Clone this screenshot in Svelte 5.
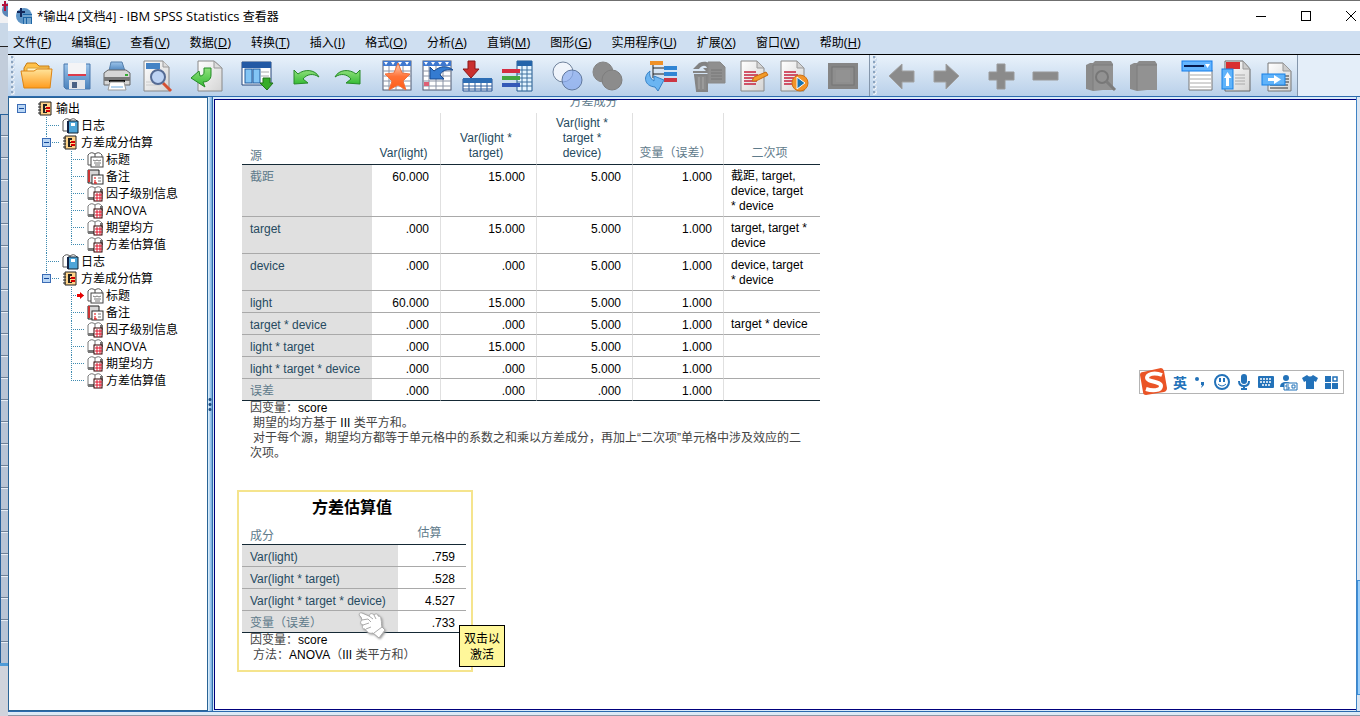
<script>
  const menus = [
    ["文件", "F"],
    ["编辑", "E"],
    ["查看", "V"],
    ["数据", "D"],
    ["转换", "T"],
    ["插入", "I"],
    ["格式", "O"],
    ["分析", "A"],
    ["直销", "M"],
    ["图形", "G"],
    ["实用程序", "U"],
    ["扩展", "X"],
    ["窗口", "W"],
    ["帮助", "H"]
  ];

  const sheet = `<path d="M4 1h16l7 7v23H4z" fill="url(#paper)" stroke="#888"/><path d="M20 1v7h7z" fill="#d5d5d5" stroke="#999"/>`;
  const lines = `<path d="M7 12h12M7 15h14M7 18h10M7 21h13M7 24h12" stroke="#c8203c" stroke-width="1.4"/>`;
  const grid = `<rect x="2" y="1" width="28" height="29" fill="#fff" stroke="#4f5870"/><path d="M2 1h28v5H2z" fill="#3f78cf"/><path d="M2 11h28M2 16h28M2 21h28M2 26h28M8 6v24M15 6v24M22 6v24" stroke="#8a93a5"/><path d="M3 2h4l-2 3zM10 2h4l-2 3zM17 2h4l-2 3zM24 2h4l-2 3z" fill="#fff"/>`;
  const book = `<path d="M2 5l4-2h3l2-2h16l2 3v25l-20 2-7-2z" fill="#8b8b8b"/><path d="M9 5h20v25H9z" fill="#929292"/><path d="M9 5v25M9 5h20" stroke="#7c7c7c" fill="none"/>`;

  const icons = {
    open: `<path d="M3 8l3-5h9l3 3h10v8H3z" fill="#ffc14a" stroke="#c47a12"/><path d="M6 8h21v8H6z" fill="#fff3c8" stroke="#d9a33a"/><path d="M0 11h13l3-2h15l-2 19H3z" fill="url(#orange)" stroke="#dd8413"/>`,
    save: `<path d="M3 4h26v25H5l-2-2z" fill="url(#blue)" stroke="#4a79ad"/><path d="M7 3h18v13H7z" fill="#f4f4f6"/><path d="M7 14h18v2H7z" fill="#dc3b4a"/><path d="M8 20h16v9H8z" fill="#e3e6ea"/><path d="M11 22h5v6h-5z" fill="#4a6285"/>`,
    print: `<path d="M8 11L10 2h11l3 9z" fill="url(#blue)" stroke="#557fab"/><path d="M3 13l4-3h18l4 3v12H3z" fill="#d6d6d6" stroke="#666"/><path d="M3 17h26v4H3z" fill="#777"/><path d="M8 20h16v2H8z" fill="#111"/><path d="M9 22h14l2 8H7z" fill="#fff" stroke="#999"/><path d="M10 27h12" stroke="#68a6dc"/><path d="M24 15h3" stroke="#32ad32" stroke-width="2"/>`,
    preview: `<path d="M3 1h19l6 6v24H3z" fill="url(#paper)" stroke="#888"/><path d="M5 3h14v6H5z" fill="#4483c5"/><path d="M22 1v6h6" fill="#ddd" stroke="#999"/><path d="M5 22h12M5 25h14" stroke="#ccc"/><path d="M22 23l8 8" stroke="#d55031" stroke-width="3"/><circle cx="17" cy="17" r="7" fill="#bdd3f4" stroke="#556b94" stroke-width="2"/>`,
    exportDoc: `<path d="M7 1h16l8 7v23H7z" fill="url(#paper)" stroke="#888"/><path d="M23 1v7h8z" fill="#ddd" stroke="#999"/><path d="M13 8h7v7c0 5-4 7-8 7l2 5L0 18l8-7 1 5c3 0 4-2 4-4z" fill="url(#green)" stroke="#258c26"/>`,
    recall: `<path d="M1 2h29v23H1z" fill="#fff" stroke="#244578"/><path d="M1 2h29v6H1z" fill="#235aa5"/><rect x="4" y="9" width="7" height="14" fill="#83c5f5" stroke="#225b9c"/><rect x="12" y="9" width="7" height="14" fill="#83c5f5" stroke="#225b9c"/><path d="M20 12h8M20 16h8" stroke="#aaa"/><path d="M22 18h7v5h3l-6 7-7-7h3z" fill="#36ad28" stroke="#207318"/>`,
    undo: `<path d="M3 10v14l14-1-5-4c4-5 10-6 16-2-4-8-15-8-21-3z" fill="url(#green)" stroke="#278a28"/>`,
    redo: `<path d="M29 10v14l-14-1 5-4c-4-5-10-6-16-2 4-8 15-8 21-3z" fill="url(#green)" stroke="#278a28"/>`,
    star: grid + `<path d="M17 3l4 10 8 1-7 7 3 9-8-5-9 5 3-9-7-7 9-1z" fill="url(#fire)" stroke="#f2703a"/>`,
    gotoCase: grid + `<path d="M3 22h5v4H3z" fill="#df6075"/><path d="M9 7l4 4c6-5 13-6 19-1-8-1-11 1-13 5l4 4H9z" fill="#347bd1" stroke="#184a90"/>`,
    gotoVar: `<path d="M2 19h29v12H2z" fill="#fff" stroke="#244f8e"/><path d="M2 18h29v5H2z" fill="#2d6db4"/><path d="M2 26h29M2 29h29M8 23v8M14 23v8M20 23v8M26 23v8" stroke="#2f5e9d"/><path d="M7 1h7v8h4l-8 9-8-9h5z" fill="#ca302e" stroke="#8a1717"/>`,
    variables: `<path d="M16 1h15v30H16z" fill="#e5f5ff" stroke="#1f568e"/><path d="M16 1h15v5H16z" fill="#2465aa"/><path d="M16 10h15M16 14h15M16 18h15M16 22h15M16 26h15M21 6v25M26 6v25" stroke="#3d719f"/><path d="M1 11h18" stroke="#d52e42" stroke-width="4"/><path d="M1 18h18" stroke="#45a642" stroke-width="4"/><path d="M1 25h18" stroke="#3459b7" stroke-width="4"/>`,
    venn: `<circle cx="12" cy="12" r="10" fill="#f5f8fd" fill-opacity=".8" stroke="#71839c"/><circle cx="21" cy="20" r="10" fill="#87a9ee" fill-opacity=".7" stroke="#60789e"/>`,
    vennOff: `<circle cx="12" cy="12" r="10" fill="#8c8c8c" stroke="#858585"/><circle cx="21" cy="20" r="10" fill="#8c8c8c" stroke="#7e7e7e"/>`,
    designate: `<path d="M8 4v14M8 8h14M8 14h14" stroke="#222" fill="none"/><path d="M5 3h13" stroke="#ef9128" stroke-width="4"/><path d="M19 8h13M19 14h13" stroke="#3185d4" stroke-width="4"/><path d="M19 20h13" stroke="#cc3543" stroke-width="4"/><path d="M5 11c-7 5-6 15 5 16l3 4 6-11-10-4v5c-4-2-5-7-4-10z" fill="#6bb5f2" stroke="#3781c5"/>`,
    trash: `<path d="M0 9l6-6c7-3 12 0 12 5h4l-6 6-6-6h4c-1-3-5-3-8 1z" fill="#828282"/><path d="M0 12h16M2 15h12v16H4z" fill="#8b8b8b" stroke="#858585" stroke-width="2"/><path d="M6 17v12M10 17v12" stroke="#aaa"/><path d="M15 2h12l5 5v16H15z" fill="#8f8f8f" stroke="#888"/><path d="M18 10h11M18 13h11M18 16h11M18 19h11" stroke="#777"/>`,
    editText: sheet + lines + `<path d="M15 21l2-4 12-5 2 3-12 6z" fill="#f29b28" stroke="#c76a10"/>`,
    run: sheet + lines + `<circle cx="23" cy="23" r="8" fill="#f29429" stroke="#cc7115"/><path d="M20 17v12l8-6z" fill="#1674b1" stroke="#fff"/>`,
    slide: `<rect x="1" y="3" width="30" height="26" fill="#858585"/><rect x="5" y="7" width="22" height="18" fill="#8e8e8e" stroke="#747474"/><rect x="9" y="10" width="14" height="12" fill="#929292"/>`,
    back: `<path d="M3 16L16 4v7h12v11H16v7z" fill="#8b8b8b" stroke="#a1a1a1"/>`,
    forward: `<path d="M29 16L16 4v7H4v11h12v7z" fill="#8b8b8b" stroke="#a1a1a1"/>`,
    plus: `<path d="M12 4h8v8h9v8h-9v9h-8v-9H4v-8h8z" fill="#8b8b8b" stroke="#999"/>`,
    minus: `<path d="M4 12h25v8H4z" fill="#8b8b8b" stroke="#999"/>`,
    bookFind: book + `<circle cx="18" cy="17" r="6" fill="none" stroke="#777" stroke-width="2"/><path d="M22 21l9 9" stroke="#7c7c7c" stroke-width="3"/>`,
    book: book,
    dropdown: `<path d="M8 10h23v20H8z" fill="#fff" stroke="#777"/><path d="M9 15h21M9 19h21M9 23h21M9 27h21" stroke="#aaa"/><rect x="1" y="1" width="30" height="10" fill="#64b5ff" stroke="#147de9"/><path d="M3 6h20" stroke="#061b50" stroke-width="2"/><path d="M24 4h5l-2.500 4z" fill="#fff"/>`,
    upDoc: `<path d="M4 1h18l7 8v22H4z" fill="url(#paper)" stroke="#666"/><path d="M5 2h14v7H5z" fill="#d92e30"/><path d="M22 1v8h7z" fill="#ccc" stroke="#999"/><path d="M14 15h10M14 18h10M14 21h10M14 24h10" stroke="#aaa"/><rect x="1" y="9" width="11" height="20" fill="#60b3fa" stroke="#1680e5"/><path d="M6.500 12l4 6H8v8H5v-8H3z" fill="#fff"/>`,
    rightDoc: `<path d="M7 3h15l8 8v20H7z" fill="url(#paper)" stroke="#777"/><path d="M22 3v8h8z" fill="#ccc" stroke="#999"/><path d="M9 28h18M24 16h4M24 19h4M24 22h4M9 25h18" stroke="#333"/><rect x="1" y="14" width="23" height="11" fill="#60b3fa" stroke="#1680e5"/><path d="M7 18h6v-3l7 4.500-7 4.500v-3H7z" fill="#fff"/>`
  };

  const mainTools = [
    ["open", "save", "print", "preview"],
    ["exportDoc"],
    ["recall"],
    ["undo", "redo"],
    ["star", "gotoCase", "gotoVar", "variables"],
    ["venn", "vennOff"],
    ["designate", "trash", "editText", "run"],
    ["slide"]
  ];
  const outlineTools = [
    ["back", "forward"],
    ["plus", "minus"],
    ["bookFind", "book"],
    ["dropdown", "upDoc", "rightDoc"]
  ];
  const extraWide = ["designate", "trash"];
  const wide = ["back", "forward", "plus", "minus", "bookFind", "book"];

  const ledger = `<path d="M1 3q3-4 7-1 4-3 7 1v10H1z" fill="#fff" stroke="#555"/><path d="M8 2v10" stroke="#555"/>`;
  const nodeIcons = {
    output: `<path d="M3 1h11v13H3z" fill="#ffd489" stroke="#222"/><path d="M1 3h3M1 6h3M1 9h3M1 12h3" stroke="#222"/><path d="M6 3h4v2H8v2h2v1H8v3h2v1H6z" fill="#222"/><path d="M9 7h4M9 10h4" stroke="#d40000" stroke-width="2"/>`,
    log: ledger + `<path d="M6 3h10v12H6z" fill="#4ea5d8" stroke="#123"/><path d="M9 5h4v3H9z" fill="#fff"/><path d="M6 3v12" stroke="#124" stroke-width="2"/>`,
    title: ledger + `<rect x="4" y="5" width="12" height="10" fill="#fff" stroke="#444"/><path d="M6 8l2 1 2-1 2 1 2-1M7 11h7M8 13h5" stroke="#777" fill="none"/>`,
    notes: `<path d="M1 1h11v13H1z" fill="#d7d7d7" stroke="#222"/><path d="M2 1v12" stroke="#c33" stroke-width="2"/><rect x="5" y="6" width="11" height="9" fill="#fff" stroke="#333"/><path d="M8 8v2M8 11v3M7 14h3" stroke="#d00"/><path d="M11 9h3M11 12h3" stroke="#777"/>`,
    table: `<path d="M1 3q3-4 7-1 4-3 7 1v10H1z" fill="#fff" stroke="#777"/><path d="M8 2v10" stroke="#777"/><path d="M1 11h6v3H1zM13 3h3v5h-3z" fill="#777"/><rect x="7" y="6" width="8" height="9" fill="#fff" stroke="#300"/><path d="M8 9h7M8 12h7M10 7v8M13 7v8" stroke="#e0142d"/>`
  };

  const children = [
    ["标题", "title"],
    ["备注", "notes"],
    ["因子级别信息", "table"],
    ["ANOVA", "table"],
    ["期望均方", "table"],
    ["方差估算值", "table"]
  ];

  let outline = [
    { name: "输出", icon: "output", level: 0, open: true },
    ...[0, 1].flatMap(run => [
      { name: "日志", icon: "log", level: 1 },
      { name: "方差成分估算", icon: "output", level: 1, open: true, last: run === 1 },
      ...children.map(([name, icon], i) => ({
        name,
        icon,
        level: 2,
        trunk: run === 0,
        last: i === children.length - 1,
        current: run === 1 && i === 0
      }))
    ])
  ];

  const meanSquares = [
    ["截距", "60.000", "15.000", "5.000", "1.000", ["截距, target,", "device, target", "* device"]],
    ["target", ".000", "15.000", "5.000", "1.000", ["target, target *", "device"]],
    ["device", ".000", ".000", "5.000", "1.000", ["device, target", "* device"]],
    ["light", "60.000", "15.000", "5.000", "1.000", []],
    ["target * device", ".000", ".000", "5.000", "1.000", ["target * device"]],
    ["light * target", ".000", "15.000", "5.000", "1.000", []],
    ["light * target * device", ".000", ".000", "5.000", "1.000", []],
    ["误差", ".000", ".000", ".000", "1.000", []]
  ];

  const estimates = [
    ["Var(light)", ".759"],
    ["Var(light * target)", ".528"],
    ["Var(light * target * device)", "4.527"],
    ["变量（误差）", ".733"]
  ];

  const isHan = text => /[\u4e00-\u9fff]/.test(text);
</script>

<svg class="defs" aria-hidden="true">
  <defs>
    <linearGradient id="paper" x2="1" y2="1"><stop stop-color="#fff" /><stop offset="1" stop-color="#d4d4d4" /></linearGradient>
    <linearGradient id="orange" x2="0" y2="1"><stop stop-color="#ffe49b" /><stop offset="1" stop-color="#ff9c1e" /></linearGradient>
    <linearGradient id="blue" x2="0" y2="1"><stop stop-color="#9cc4ea" /><stop offset="1" stop-color="#4b83bd" /></linearGradient>
    <linearGradient id="green" x2="0" y2="1"><stop stop-color="#8fe07c" /><stop offset="1" stop-color="#35bb35" /></linearGradient>
    <linearGradient id="fire" x2="0" y2="1"><stop stop-color="#ffd5bd" /><stop offset=".5" stop-color="#ff7338" /><stop offset="1" stop-color="#ff5c16" /></linearGradient>
  </defs>
</svg>

{#snippet tools(groups)}
  {#each groups as group}
    <div class="group">
      {#each group as name}
        <button class="tool" class:wide={wide.includes(name)} class:extra={extraWide.includes(name)} aria-label={name}>
          <svg width="32" height="32" viewBox="0 0 32 32">{@html icons[name]}</svg>
        </button>
      {/each}
    </div>
  {/each}
{/snippet}

<div class="desktop">
  <div class="behind">
    <div class="behind-title"><svg width="8" height="22" viewBox="0 0 8 22"><circle cx="9" cy="10" r="7" fill="#5b87b8" /><path d="M5 1v10M2 5h6" stroke="#b3123c" stroke-width="2" /></svg></div>
    <div class="behind-menu"></div>
    <div class="behind-tools"></div>
    <div class="behind-rows"></div>
    <div class="behind-foot"></div>
  </div>

  <div class="window">
    <header class="titlebar">
      <svg width="16" height="16" viewBox="0 0 16 16">
        <circle cx="8" cy="8" r="8" fill="#5d94c6" />
        <path d="M5 0v9M1 4h8" stroke="#14285a" stroke-width="2" />
        <path d="M7 6h9v10H7z" fill="#1d65a5" />
        <path d="M7 8h9M9 10v6M12 10v6M14 10v6" stroke="#c8e3f6" />
      </svg>
      <h1>*输出4 [文档4] - <span class="latin">IBM SPSS Statistics</span> 查看器</h1>
      <div class="controls">
        <button aria-label="最小化"><svg width="11" height="11"><path d="M0 5.500h10" stroke="#000" /></svg></button>
        <button aria-label="最大化"><svg width="11" height="11"><rect x=".5" y=".5" width="9" height="9" fill="none" stroke="#000" /></svg></button>
        <button aria-label="关闭"><svg width="11" height="11"><path d="M0 0l10 10M10 0L0 10" stroke="#000" /></svg></button>
      </div>
    </header>

    <nav class="menubar">
      {#each menus as [label, key]}
        <button>{label}<span class="latin">(<u>{key}</u>)</span></button>
      {/each}
    </nav>

    <div class="toolbars">
      <div class="toolbar">
        <i class="grip"></i>
        {@render tools(mainTools)}
      </div>
      <div class="toolbar second">
        <i class="grip"></i>
        {@render tools(outlineTools)}
      </div>
    </div>

    <div class="workspace">
      <ul class="outline">
        {#each outline as node}
          <li>
            {#if node.level > 0}
              <i class="indent"></i>
            {/if}
            {#if node.level === 2}
              <svg class="guide" width="25" height="17">{#if node.trunk}<path d="M12.500 0v17" />{/if}</svg>
            {/if}
            <svg class="guide" width="25" height="17">
              {#if node.level > 0}
                <path d={node.last ? "M12.500 0v9M12 8.500h13" : "M12.500 0v17M12 8.500h13"} />
              {/if}
              {#if node.open}
                <rect x="8.500" y="4.500" width="8" height="8" fill="#b9d6f5" stroke="#3b6cb5" />
                <path class="solid" d="M10 8.500h5" />
              {/if}
              {#if node.current}
                <path class="arrow" d="M18 7h3V5l4 3.500-4 3.500v-2h-3z" />
              {/if}
            </svg>
            <svg class="node" width="16" height="16" viewBox="0 0 16 16">{@html nodeIcons[node.icon]}</svg>
            <span>{node.name}</span>
          </li>
        {/each}
      </ul>

      <div class="splitter"><i></i></div>

      <main class="viewer">
        <section class="result">
          <table class="squares">
            <colgroup>
              <col class="c-source" /><col class="c-light" /><col class="c-target" /><col class="c-target" /><col class="c-error" /><col class="c-terms" />
            </colgroup>
            <thead>
              <tr class="spanner">
                <td></td>
                <th class="han" colspan="5">方差成分</th>
              </tr>
              <tr>
                <th class="source han">源</th>
                <th>Var(light)</th>
                <th>Var(light *<br />target)</th>
                <th>Var(light *<br />target *<br />device)</th>
                <th class="han">变量（误差）</th>
                <th class="han">二次项</th>
              </tr>
            </thead>
            <tbody>
              {#each meanSquares as [source, a, b, c, d, terms]}
                <tr>
                  <th class:han={isHan(source)}>{source}</th>
                  <td>{a}</td>
                  <td>{b}</td>
                  <td>{c}</td>
                  <td>{d}</td>
                  <td class="terms">{#each terms as term}<div>{term}</div>{/each}</td>
                </tr>
              {/each}
            </tbody>
          </table>
          <div class="notes">
            <p>因变量：<b>score</b></p>
            <p class="in">期望的均方基于 <b>III</b> 类平方和。</p>
            <p class="in">对于每个源，期望均方都等于单元格中的系数之和乘以方差成分，再加上“二次项”单元格中涉及效应的二</p>
            <p>次项。</p>
          </div>
        </section>

        <section class="result selected">
          <h2>方差估算值</h2>
          <table class="estimates">
            <colgroup><col class="c-part" /><col class="c-light" /></colgroup>
            <thead>
              <tr>
                <th class="source han">成分</th>
                <th class="han">估算</th>
              </tr>
            </thead>
            <tbody>
              {#each estimates as [part, value]}
                <tr>
                  <th class:han={isHan(part)}>{part}</th>
                  <td>{value}</td>
                </tr>
              {/each}
            </tbody>
          </table>
          <div class="notes">
            <p>因变量：<b>score</b></p>
            <p class="in">方法：<b>ANOVA</b>（<b>III</b> 类平方和）</p>
          </div>
          <svg class="hand" width="28" height="28" viewBox="0 0 28 28">
            <path d="M3 5C0 3 1 0 4 1l7 3c1-3 3-3 5-1 2-2 4-1 4 1 2 0 3 1 3 3 1 4 0 6 1 8l3 3-6 8-6-5c-4 1-6-1-8-4-3 0-3-2-2-4-3-1-3-3-1-5z" fill="#fff" stroke="#aaa" />
            <path d="M4 8l6-1 3 3M11 4l4 3M16 3l2 4M5 13l6-2M8 17l5-2M16 21l8-6" stroke="#aaa" fill="none" />
          </svg>
          <div class="tip">双击以<br />激活</div>
        </section>
      </main>

      <div class="scroll"><i></i></div>
    </div>
    <footer></footer>
  </div>

  <div class="ime">
    <svg class="sogou" width="30" height="30" viewBox="0 0 30 30">
      <path d="M4 5Q1 5 1 8l3 17q0 3 3 3l18-3q3-1 3-4L25 4q-1-3-3-3z" fill="#ea5426" />
      <path d="M23 8C15 5 8 7 8 11s14 3 14 8-9 5-15 3" fill="none" stroke="#fff" stroke-width="4" />
    </svg>
    <span>英</span>
    <svg width="18" height="18" viewBox="0 0 18 18"><circle cx="6" cy="6" r="2" /><path d="M10 9h3v3l-3 3 1-3h-1z" /></svg>
    <svg width="18" height="18" viewBox="0 0 18 18"><circle cx="9" cy="9" r="7" fill="none" stroke="#2372b9" stroke-width="2" /><path d="M6 5h2v4H6zM10 5h2v4h-2z" /><path d="M5 11q4 4 8 0" fill="none" stroke="#2372b9" /></svg>
    <svg width="18" height="18" viewBox="0 0 18 18"><rect x="6" y="1" width="6" height="10" rx="3" /><path d="M4 8q0 5 5 5t5-5M9 13v3M6 16h6" fill="none" stroke="#2372b9" stroke-width="2" /></svg>
    <svg width="18" height="18" viewBox="0 0 18 18"><rect x="1" y="3" width="16" height="12" rx="1" /><path d="M3 6h12M3 9h12M5 12h8" stroke="#fff" stroke-width="1.500" stroke-dasharray="2 1" /></svg>
    <svg width="18" height="18" viewBox="0 0 18 18"><circle cx="7" cy="5" r="3" /><path d="M1 14q0-5 6-5t5 5z" /><path d="M5 10h13v7H5z" fill="#fff" stroke="#2372b9" /><path d="M10 12H7v2h3v2H7M13 12h3v3h-3z" fill="none" stroke="#2372b9" /></svg>
    <svg width="18" height="18" viewBox="0 0 18 18"><path d="M6 2q3 3 6 0l5 3-2 4-2-1v8H5V8L3 9 1 5z" /></svg>
    <svg width="18" height="18" viewBox="0 0 18 18"><path d="M2 3h6v6H2zM2 10h6v6H2zM9 10h6v6H9z" /><rect x="10" y="4" width="4" height="4" fill="none" stroke="#2372b9" stroke-width="1.500" /></svg>
  </div>
</div>

<style>
  :global(body) {
    margin: 0;
    overflow: hidden;
    font: 12px/17px "Open Sans", "Noto Sans CJK SC", sans-serif;
    color: #000;
  }

  button {
    padding: 0;
    border: 0;
    background: none;
    font: inherit;
    color: inherit;
  }

  svg {
    display: block;
    flex: none;
    overflow: visible;
  }

  .defs {
    position: absolute;
    width: 0;
    height: 0;
  }

  .latin {
    font-size: 13px;
  }

  .desktop {
    display: flex;
    height: 100vh;
    position: relative;
  }

  .behind {
    flex: none;
    width: 8px;
    display: flex;
    flex-direction: column;
    overflow: hidden;
    background: #c3cbd6;
  }

  .behind-title {
    height: 23px;
    background: #f1f1f3;
  }

  .behind-menu {
    height: 23px;
    background: #c9d8e8;
    border-bottom: 1px solid #222;
  }

  .behind-tools {
    height: 67px;
    background: #c2cddb;
    border-bottom: 1px solid #27619b;
  }

  .behind-rows {
    flex: 1;
    border-left: 1px solid #27619b;
    background: repeating-linear-gradient(#b8c4d5 0 20px, #6f8197 20px 21px, #e8edf5 21px 22px);
  }

  .behind-foot {
    height: 50px;
    border-top: 3px solid #4e9bd8;
    background: #cfd3dc;
  }

  .window {
    flex: 1;
    min-width: 0;
    display: flex;
    flex-direction: column;
    background: #dfeaf6;
  }

  .titlebar {
    height: 30px;
    display: flex;
    align-items: center;
    padding-left: 8px;
    border-top: 1px solid #6f6f6f;
    background: #fff;
  }

  h1 {
    flex: 1;
    margin: 0 0 0 5px;
    font-size: 12px;
    font-weight: 400;
  }

  .controls button {
    width: 45px;
    height: 29px;
    padding-left: 17px;
  }

  .controls {
    display: flex;
    margin-right: -14px;
  }

  .menubar {
    display: flex;
    gap: 20px;
    height: 23px;
    padding-left: 5px;
    background: #cfdff1;
    border-bottom: 1px solid #000;
  }

  .toolbars {
    display: flex;
    height: 41px;
    background: #e4eef9;
    border-bottom: 1px solid #2b6aad;
  }

  .toolbar {
    display: flex;
    align-items: center;
    gap: 10px;
    padding-right: 6px;
    border-right: 1px solid #8496ab;
    background: linear-gradient(#e9f2fb, #b9d0e9);
  }

  .second {
    gap: 11px;
    padding-right: 0;
  }

  .grip {
    width: 4px;
    height: 39px;
    margin: 0 -8px 0 3px;
    background: radial-gradient(circle at 1px 1px, #8ba4c0 1px, #fff 2px, #cbdcf0 3px) 0 0 / 4px 5px;
  }

  .group {
    display: flex;
  }

  .tool {
    width: 40px;
    height: 40px;
    padding: 0 4px;
  }

  .wide {
    width: 44px;
    padding: 0 6px;
  }

  .extra {
    width: 48px;
    padding: 0 8px;
  }

  .workspace {
    flex: 1;
    min-height: 0;
    display: flex;
    background: #d9ebfa;
  }

  .outline {
    flex: none;
    width: 198px;
    margin: 0;
    padding: 2px 0;
    list-style: none;
    border: 1px solid #2a6496;
    background: #fff;
  }

  .outline li {
    display: flex;
    align-items: center;
    height: 17px;
    white-space: nowrap;
  }

  .outline span {
    margin-left: 3px;
  }

  .indent {
    width: 25px;
  }

  .node {
    margin-left: 3px;
  }

  .guide path {
    fill: none;
    stroke: #3f8bb0;
    stroke-dasharray: 1 1;
  }

  .guide .solid {
    stroke: #14499c;
    stroke-dasharray: none;
  }

  .guide .arrow {
    fill: #e80000;
    stroke: none;
  }

  .splitter {
    width: 5px;
    display: flex;
    align-items: center;
    box-sizing: border-box;
    border-right: 1px solid #2f6ba8;
    background: linear-gradient(90deg, #e6f5ff, #6fa9de);
  }

  .splitter i {
    width: 4px;
    height: 14px;
    background: radial-gradient(circle, #1d4a80 1px, transparent 2px) 0 0 / 4px 5px;
  }

  .viewer {
    flex: 1;
    min-width: 0;
    overflow: hidden;
    margin: 2px 0 1px 1px;
    border: 1px solid #00007c;
    border-right: 0;
    background: #fff;
    font: 12px/15px "Liberation Sans", "Noto Sans CJK SC", sans-serif;
  }

  .scroll {
    width: 4px;
    display: flex;
    align-items: flex-end;
    box-sizing: border-box;
    padding: 1px 0 16px;
    border-left: 1px solid #3f83c4;
    background: #dce6f2;
  }

  .scroll i {
    flex: 1;
    height: 19%;
    border: 1px solid #3d8fd9;
    border-right: 0;
    background: #9bcffa;
  }

  footer {
    height: 3px;
    border-top: 1px solid #2b6aad;
    border-bottom: 1px solid #8c97a5;
    background: #dceaf6;
  }

  .result {
    width: 578px;
    margin: -9px 0 0 27px;
  }

  table {
    width: 100%;
    table-layout: fixed;
    border-collapse: separate;
    border-spacing: 0;
  }

  .c-source {
    width: 130px;
  }

  .c-light {
    width: 68px;
  }

  .c-target {
    width: 96px;
  }

  .c-error {
    width: 91px;
  }

  .c-terms {
    width: 97px;
  }

  .c-part {
    width: 156px;
  }

  th,
  td {
    padding: 5px 11px 1px;
    border-bottom: 1px solid #a9a9a9;
    font-weight: 400;
    text-align: right;
    vertical-align: top;
    white-space: nowrap;
  }

  th {
    color: #264a60;
  }

  .han {
    color: #5f7b8b;
  }

  thead th {
    padding: 3px 5px 3px 0;
    border-bottom-color: #152935;
    text-align: center;
    vertical-align: bottom;
  }

  .spanner th,
  .spanner td {
    height: 16px;
    border-bottom: 0;
  }

  thead .source,
  tbody th {
    padding-left: 8px;
    text-align: left;
  }

  thead .source {
    padding-bottom: 0;
  }

  tbody th {
    background: #e0e0e0;
  }

  tbody td {
    height: 15px;
  }

  tbody tr:last-child > * {
    border-bottom-color: #152935;
  }

  .squares tr:not(.spanner) > :nth-child(n + 3) {
    border-left: 1px solid #e0e0e0;
  }

  .squares .terms {
    padding: 4px 0 2px 7px;
    text-align: left;
  }

  .notes {
    padding-left: 8px;
    white-space: nowrap;
    color: #444;
  }

  .notes b {
    font-weight: 400;
    color: #000;
  }

  p {
    margin: 0;
  }

  .in {
    padding-left: 3px;
  }

  .selected {
    position: relative;
    width: 224px;
    margin: 29px 0 0 22px;
    padding: 0 5px 7px 3px;
    border: 2px solid #f5e48d;
  }

  h2 {
    margin: 0;
    padding: 6px 4px 5px 0;
    font-size: 16px;
    line-height: 20px;
    text-align: center;
  }

  .hand {
    position: absolute;
    left: 119px;
    top: 120px;
    filter: drop-shadow(1px 1px 1px #999);
  }

  .tip {
    position: absolute;
    left: 220px;
    top: 133px;
    padding: 5px 4px 3px;
    border: 1px solid #000;
    background: #fff79a;
    font-family: "Open Sans", "Noto Sans CJK SC", sans-serif;
    line-height: 16px;
    text-align: center;
    white-space: nowrap;
  }

  .ime {
    position: absolute;
    right: 16px;
    top: 370px;
    display: flex;
    align-items: center;
    gap: 4px;
    height: 22px;
    padding-right: 2px;
    border: 1px solid #b4b4b4;
    background: #fff;
    color: #2372b9;
    font-size: 14px;
    font-weight: 700;
  }

  .ime svg {
    fill: #2372b9;
  }

  .ime .sogou {
    margin-left: -1px;
  }
</style>
